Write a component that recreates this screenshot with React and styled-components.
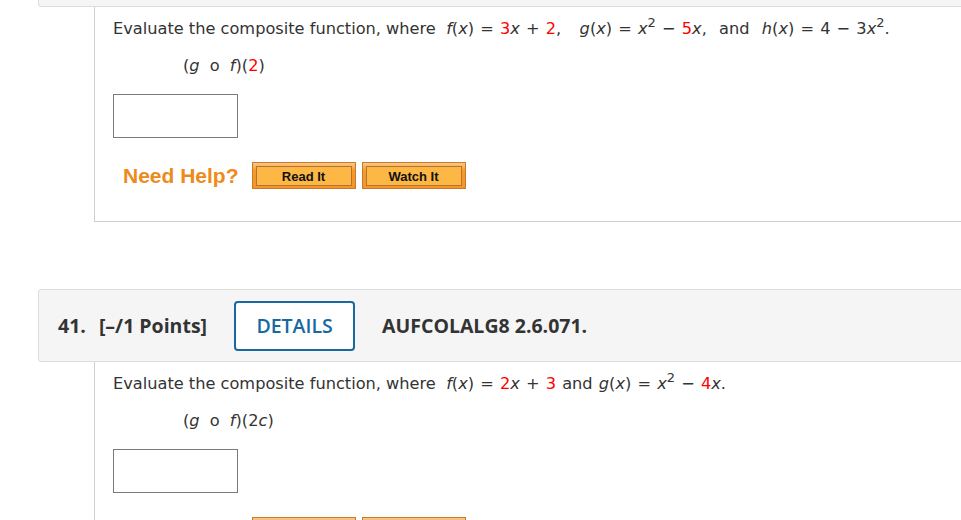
import styled, { createGlobalStyle } from "styled-components";

const Global = createGlobalStyle`
  body {
    margin: 0;
    background: #fff;
    overflow: hidden;
    font-family: "DejaVu Sans", Verdana, sans-serif;
  }
`;

const Page = styled.div`
  width: 1040px;
  padding-left: 38px;
`;

const Question = styled.section`
  margin-bottom: 67px;
`;

const HeaderTail = styled.div`
  height: 6px;
  background: #f5f5f5;
  border: 1px solid #dcdcdc;
  border-top: none;
  border-radius: 0 0 0 3px;
`;

const Header = styled.div`
  display: flex;
  align-items: center;
  height: 71px;
  padding-left: 19px;
  background: #f5f5f5;
  border: 1px solid #dcdcdc;
  border-radius: 3px 0 0 3px;
  font-family: "Open Sans", "Noto Sans", sans-serif;
  font-weight: 700;
  font-size: 19.5px;
  color: #333;
`;

const Num = styled.span`
  margin-right: 13px;
`;

const Points = styled.span`
  margin-right: 27px;
`;

const DetailsBtn = styled.button`
  width: 121px;
  height: 50px;
  border: 2px solid #17699f;
  border-radius: 4px;
  background: #fff;
  color: #17699f;
  font-family: "Open Sans", "Noto Sans", sans-serif;
  font-weight: 600;
  font-size: 19.5px;
  margin-right: 27px;
  padding: 0;
`;

const Body = styled.div`
  margin-left: 56px;
  border-left: 1px solid #cfcfcf;
  border-bottom: ${(p) => (p.$closed ? "1px solid #cfcfcf" : "none")};
  height: ${(p) => p.$h}px;
  padding: 11px 0 0 18px;
  box-sizing: border-box;
  color: #333;
  font-size: 16.2px;
`;

const Line = styled.div`
  line-height: 22px;
  white-space: nowrap;
`;

const Math = styled.span`
  word-spacing: 1px;
`;

const Expr = styled.div`
  margin: 15px 0 0 70px;
  line-height: 22px;
  word-spacing: 1px;
`;

const Compose = styled.span`
  margin: 0 4px;
`;

const V = styled.i`
  font-style: italic;
`;

const R = styled.span`
  color: #ff0000;
`;

const Sup = styled.sup`
  font-size: 13px;
  vertical-align: 7px;
  line-height: 0;
`;

const Answer = styled.div`
  width: 123px;
  height: 42px;
  margin-top: 17px;
  border: 1px solid #7a7a7a;
  background: #fff;
`;

const Help = styled.div`
  display: flex;
  align-items: center;
  gap: 6px;
  margin: 24px 0 0 10px;
`;

const HelpLabel = styled.span`
  font-family: "Liberation Sans", Arial, sans-serif;
  font-weight: 700;
  font-size: 21px;
  color: #ee8a1a;
  margin-right: 7px;
`;

const OrangeBtn = styled.span`
  display: inline-flex;
  box-sizing: border-box;
  width: 104px;
  height: 27px;
  padding: 3px 3px 2px;
  border: 1px solid #c77a2c;
  background: linear-gradient(#fbc88a, #f59a2e 30%, #f3952a);
`;

const OrangeInner = styled.span`
  flex: 1;
  display: flex;
  align-items: center;
  justify-content: center;
  border: 1px solid #b8732c;
  background: #fdb745;
  font-family: "Liberation Sans", Arial, sans-serif;
  font-weight: 700;
  font-size: 13px;
  color: #111;
`;

const ReadWatch = () => (
  <Help>
    <HelpLabel>Need Help?</HelpLabel>
    <OrangeBtn>
      <OrangeInner>Read It</OrangeInner>
    </OrangeBtn>
    <OrangeBtn>
      <OrangeInner>Watch It</OrangeInner>
    </OrangeBtn>
  </Help>
);

export default function App() {
  return (
    <Page>
      <Global />
      <Question>
        <HeaderTail />
        <Body $closed $h={215}>
          <Line>
            Evaluate the composite function, where&nbsp;{" "}
            <Math>
              <V>f</V>(<V>x</V>) = <R>3</R>
              <V>x</V> + <R>2</R>,&nbsp;&nbsp; <V>g</V>(<V>x</V>) = <V>x</V>
              <Sup>2</Sup> − <R>5</R>
              <V>x</V>,&nbsp; and&nbsp; <V>h</V>(<V>x</V>) = 4 − 3<V>x</V>
              <Sup>2</Sup>.
            </Math>
          </Line>
          <Expr>
            (<V>g</V> <Compose>o</Compose> <V>f</V>)(<R>2</R>)
          </Expr>
          <Answer />
          <ReadWatch />
        </Body>
      </Question>
      <Question>
        <Header>
          <Num>41.</Num>
          <Points>[–/1 Points]</Points>
          <DetailsBtn>DETAILS</DetailsBtn>
          <span>AUFCOLALG8 2.6.071.</span>
        </Header>
        <Body $h={300}>
          <Line>
            Evaluate the composite function, where&nbsp;{" "}
            <Math>
              <V>f</V>(<V>x</V>) = <R>2</R>
              <V>x</V> + <R>3</R> and <V>g</V>(<V>x</V>) = <V>x</V>
              <Sup>2</Sup> − <R>4</R>
              <V>x</V>.
            </Math>
          </Line>
          <Expr>
            (<V>g</V> <Compose>o</Compose> <V>f</V>)(2<V>c</V>)
          </Expr>
          <Answer />
          <ReadWatch />
        </Body>
      </Question>
    </Page>
  );
}
